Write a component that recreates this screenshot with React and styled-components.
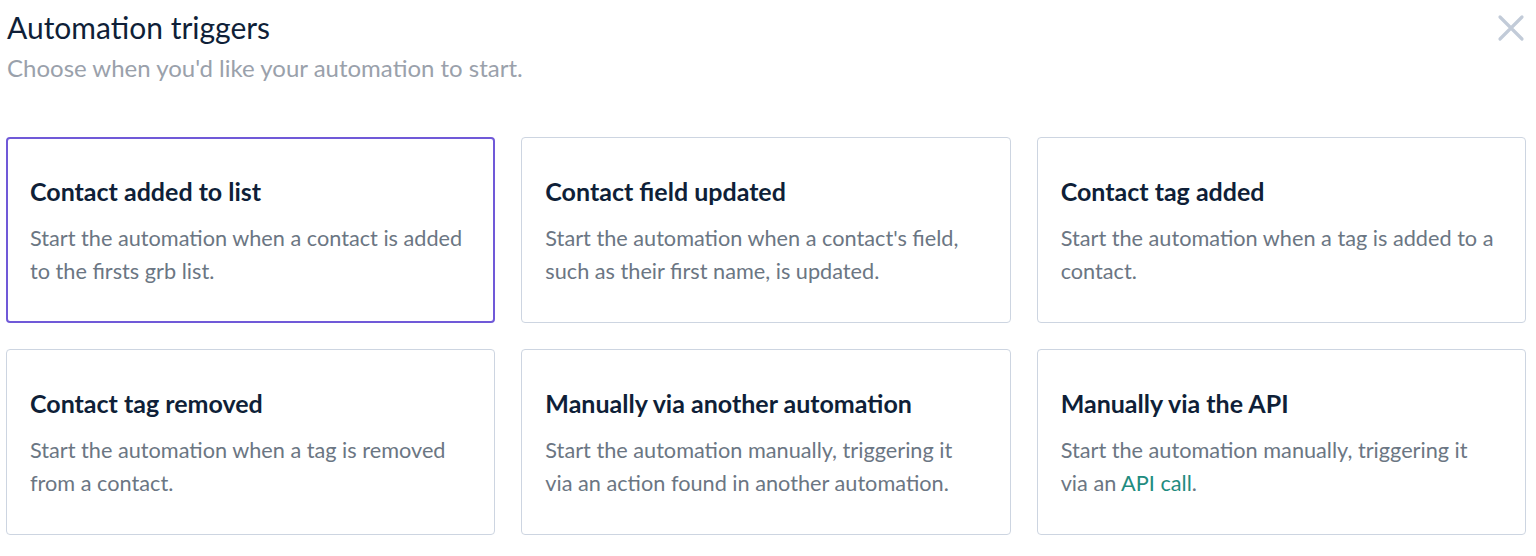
import styled, { createGlobalStyle } from "styled-components";

const GlobalStyle = createGlobalStyle`
  html, body {
    margin: 0;
    padding: 0;
    background: #ffffff;
    font-family: Lato, "Noto Sans", sans-serif;
  }
`;

const Page = styled.div`
  padding: 9px 10px 0 6px;
`;

const Header = styled.div`
  display: flex;
  justify-content: space-between;
  align-items: flex-start;
  padding-left: 1px;
`;

const Heading = styled.h1`
  margin: 0;
  font-size: 30px;
  line-height: 36px;
  font-weight: 400;
  color: #0f1f38;
`;

const Subtitle = styled.p`
  margin: 5px 0 0;
  font-size: 24px;
  line-height: 36px;
  color: #9aa1ab;
`;

const CloseButton = styled.button`
  border: 0;
  background: none;
  padding: 0;
  margin-top: 4px;
  width: 30px;
  height: 30px;
  cursor: pointer;
  display: flex;
  align-items: center;
  justify-content: center;
`;

const Grid = styled.div`
  display: grid;
  grid-template-columns: repeat(3, 1fr);
  gap: 26px;
  margin-top: 51px;
`;

const Card = styled.div`
  border: ${(p) => (p.$selected ? "2px solid #7059d8" : "1px solid #cdd5e1")};
  border-radius: 4px;
  padding: ${(p) => (p.$selected ? "37px 28px 33px 22px" : "38px 29px 34px 23px")};
  background: #fff;
  cursor: pointer;
`;

const CardTitle = styled.h3`
  margin: 0;
  font-size: 25px;
  line-height: 30px;
  font-weight: 700;
  color: #0f1f38;
`;

const CardText = styled.p`
  margin: 16px 0 0;
  font-size: 21.7px;
  line-height: 33px;
  color: #6b7683;
`;

const Link = styled.a`
  color: #1f8c80;
  text-decoration: none;
`;

const triggers = [
  {
    title: "Contact added to list",
    text: "Start the automation when a contact is added to the firsts grb list.",
    selected: true,
  },
  {
    title: "Contact field updated",
    text: "Start the automation when a contact's field, such as their first name, is updated.",
  },
  {
    title: "Contact tag added",
    text: "Start the automation when a tag is added to a contact.",
  },
  {
    title: "Contact tag removed",
    text: "Start the automation when a tag is removed from a contact.",
  },
  {
    title: "Manually via another automation",
    text: "Start the automation manually, triggering it via an action found in another automation.",
  },
  {
    title: "Manually via the API",
    text: (
      <>
        Start the automation manually, triggering it via an <Link href="#">API call</Link>.
      </>
    ),
  },
];

export default function App() {
  return (
    <Page>
      <GlobalStyle />
      <Header>
        <div>
          <Heading>Automation triggers</Heading>
          <Subtitle>Choose when you'd like your automation to start.</Subtitle>
        </div>
        <CloseButton aria-label="Close">
          <svg width="28" height="28" viewBox="0 0 28 28">
            <path
              d="M3 3 L25 25 M25 3 L3 25"
              stroke="#c2cbd8"
              strokeWidth="3.2"
              strokeLinecap="round"
            />
          </svg>
        </CloseButton>
      </Header>
      <Grid>
        {triggers.map((t) => (
          <Card key={t.title} $selected={t.selected}>
            <CardTitle>{t.title}</CardTitle>
            <CardText>{t.text}</CardText>
          </Card>
        ))}
      </Grid>
    </Page>
  );
}
